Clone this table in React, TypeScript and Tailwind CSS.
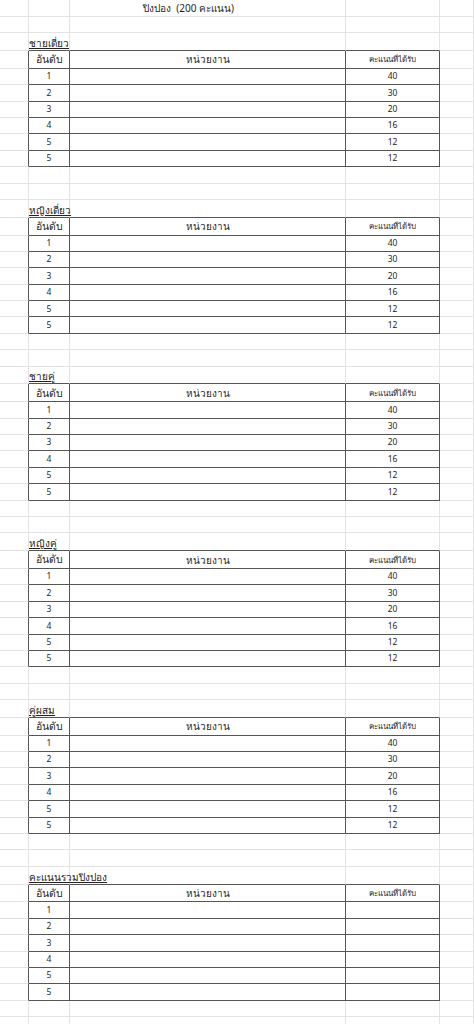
import * as React from 'react'

// ตารางคะแนนปิงปองแบบหน้า spreadsheet
const sections = [
  { title: 'ชายเดี่ยว', scores: ['40', '30', '20', '16', '12', '12'] },
  { title: 'หญิงเดี่ยว', scores: ['40', '30', '20', '16', '12', '12'] },
  { title: 'ชายคู่', scores: ['40', '30', '20', '16', '12', '12'] },
  { title: 'หญิงคู่', scores: ['40', '30', '20', '16', '12', '12'] },
  { title: 'คู่ผสม', scores: ['40', '30', '20', '16', '12', '12'] },
  { title: 'คะแนนรวมปิงปอง', scores: ['', '', '', '', '', ''] },
]

const ranks = ['1', '2', '3', '4', '5', '5']

const grid = 'grid grid-cols-[29px_41px_276px_94px_1fr]'
const cell = 'border-r border-b border-[#e3e3e3] flex items-center min-w-0'
const topEdge = 'border-r border-b border-r-[#e3e3e3] border-b-[#555]'

// แถวว่างที่มีแค่เส้นกริด
function BlankRow({ h = 'h-[16.4px]' }: { h?: string }) {
  return (
    <div className={`${grid} ${h}`}>
      <div className={cell} />
      <div className={cell} />
      <div className={cell} />
      <div className={cell} />
      <div className={cell} />
    </div>
  )
}

function LabelRow({ title }: { title: string }) {
  return (
    <div className={`${grid} h-[17.8px]`}>
      <div className={cell} />
      <div className={`${topEdge} flex items-end pb-[2px] whitespace-nowrap relative z-10`}>
        <span className="underline underline-offset-[1px] text-[10px] leading-none text-[#222]">{title}</span>
      </div>
      <div className={topEdge} />
      <div className={topEdge} />
      <div className={cell} />
    </div>
  )
}

function TableRow({ h, a, b, c, headerRow }: { h: string; a: string; b: string; c: string; headerRow?: boolean }) {
  return (
    <div className={`${grid} ${h}`}>
      <div className="border-r border-b border-r-[#555] border-b-[#e3e3e3]" />
      <div className="border-r border-b border-[#555] flex items-center justify-center">
        <span className={headerRow ? 'text-[10.5px] leading-none' : 'text-[8.5px] leading-none'}>{a}</span>
      </div>
      <div className="border-r border-b border-[#555] flex items-center justify-center">
        <span className="text-[10px] leading-none">{b}</span>
      </div>
      <div className="border-r border-b border-[#555] flex items-center justify-center">
        <span className={headerRow ? 'text-[8px] leading-none' : 'text-[8.5px] leading-none'}>{c}</span>
      </div>
      <div className={cell} />
    </div>
  )
}

function Section({ title, scores }: { title: string; scores: string[] }) {
  return (
    <div>
      <LabelRow title={title} />
      <TableRow h="h-[17.8px]" a="อันดับ" b="หน่วยงาน" c="คะแนนที่ได้รับ" headerRow />
      {ranks.map((r, i) => (
        <TableRow key={i} h="h-[16.4px]" a={r} b="" c={scores[i]} />
      ))}
      <BlankRow />
      <BlankRow />
    </div>
  )
}

export default function App() {
  return (
    <div
      className="w-[474px] h-[1024px] overflow-hidden bg-white text-[#1f1f1f]"
      style={{ fontFamily: 'Tahoma, "Noto Sans", "DejaVu Sans", sans-serif' }}
    >
      <div className={`${grid} h-[16.6px]`}>
        <div className={cell} />
        <div className={cell} />
        <div className={`${cell} pl-[73px] whitespace-nowrap`}>
          <span className="text-[10px] leading-none">ปิงปอง&nbsp;&nbsp;(200 คะแนน)</span>
        </div>
        <div className={cell} />
        <div className={cell} />
      </div>
      <BlankRow h="h-[16.6px]" />
      {sections.map((s, i) => (
        <Section key={i} title={s.title} scores={s.scores} />
      ))}
    </div>
  )
}
